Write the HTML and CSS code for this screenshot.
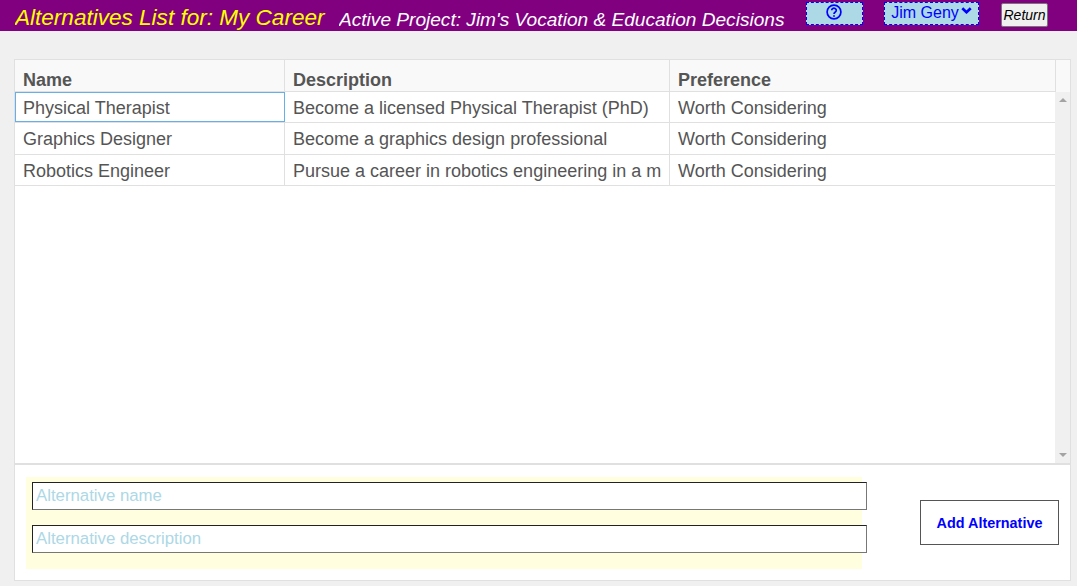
FILE: index.html
```html
<!DOCTYPE html>
<html lang="en">
<head>
    <meta charset="UTF-8">
    <meta name="viewport" content="width=device-width, initial-scale=1.0">
    <title>Alternatives List</title>
    <link rel="stylesheet" href="styles.css">
</head>
<body>
    <header class="top-bar">
        <h1 class="page-title">Alternatives List for: My Career</h1>
        <span class="project-name">Active Project: Jim's Vocation &amp; Education Decisions</span>
        <button class="nav-button help-button" aria-label="Help">
            <svg width="16" height="16" viewBox="0 0 16 16" fill="none" stroke="currentColor" stroke-width="1.7">
                <circle cx="8" cy="8" r="6.9"></circle>
                <path d="M5.7 6.3a2.3 2.1 0 1 1 3.6 1.7c-.9.6-1.3 1-1.3 2"></path>
                <path d="M8 11.2v1.6"></path>
            </svg>
        </button>
        <button class="nav-button user-button">
            Jim Geny
            <svg width="11" height="7" viewBox="0 0 12 8" fill="none" stroke="currentColor" stroke-width="3">
                <path d="M1.2 1.4L6 6l4.8-4.6"></path>
            </svg>
        </button>
        <button class="return-button">Return</button>
    </header>

    <main class="panel">
        <div class="grid">
            <div class="grid-head">
                <div class="cell name-col">Name</div>
                <div class="cell desc-col">Description</div>
                <div class="cell pref-col">Preference</div>
                <div class="head-spacer"></div>
            </div>
            <div class="grid-body">
                <div class="rows">
                    <div class="row">
                        <div class="cell name-col focused">Physical Therapist</div>
                        <div class="cell desc-col"><div class="cell-text">Become a licensed Physical Therapist (PhD)</div></div>
                        <div class="cell pref-col">Worth Considering</div>
                    </div>
                    <div class="row tall-row">
                        <div class="cell name-col">Graphics Designer</div>
                        <div class="cell desc-col"><div class="cell-text">Become a graphics design professional</div></div>
                        <div class="cell pref-col">Worth Considering</div>
                    </div>
                    <div class="row">
                        <div class="cell name-col">Robotics Engineer</div>
                        <div class="cell desc-col"><div class="cell-text">Pursue a career in robotics engineering in a major company</div></div>
                        <div class="cell pref-col">Worth Considering</div>
                    </div>
                </div>
                <div class="scrollbar">
                    <span class="arrow arrow-up"></span>
                    <span class="arrow arrow-down"></span>
                </div>
            </div>
        </div>

        <div class="add-form">
            <div class="fields">
                <input class="field" type="text" placeholder="Alternative name">
                <input class="field" type="text" placeholder="Alternative description">
            </div>
            <button class="add-button">Add Alternative</button>
        </div>
    </main>
</body>
</html>
```

FILE: styles.css
```css
* {
    margin: 0;
    padding: 0;
    box-sizing: border-box;
}

body {
    font-family: 'Liberation Sans', Arial, sans-serif;
    background: #f0f0f0;
    height: 586px;
    overflow: hidden;
}

.top-bar {
    height: 31px;
    background: #800080;
    display: flex;
    align-items: flex-start;
    padding-left: 15px;
}

.page-title {
    width: 324px;
    font-size: 22.55px;
    font-weight: 400;
    font-style: italic;
    line-height: 36px;
    height: 31px;
    overflow: hidden;
    color: #ffff00;
    white-space: nowrap;
}

.project-name {
    width: 467px;
    font-size: 19.1px;
    font-style: italic;
    line-height: 39px;
    height: 31px;
    overflow: hidden;
    color: #fff;
    white-space: nowrap;
}

.nav-button {
    height: 23px;
    margin-top: 2px;
    background: lightblue;
    border: 1px dashed #0000ff;
    color: #0000ff;
    font-family: inherit;
    font-size: 16px;
    display: flex;
    justify-content: center;
}

.help-button {
    width: 57px;
    padding: 1px 1px 0 0;
}

.user-button {
    width: 95px;
    margin-left: 21px;
    gap: 2px;
    line-height: 20px;
}

.user-button svg {
    margin-top: 4px;
}

.return-button {
    width: 47px;
    height: 24px;
    margin: 3px 0 0 22px;
    background: #f0f0f0;
    border: 1px solid #777;
    border-radius: 2px;
    color: #000;
    font-family: inherit;
    font-size: 14px;
    font-style: italic;
}

.panel {
    margin: 28px 6px 0 14px;
    height: 522px;
    display: flex;
    flex-direction: column;
    background: #fff;
    border: 1px solid #e0e0e0;
}

.grid {
    height: 405px;
    display: flex;
    flex-direction: column;
    border-bottom: 2px solid #e0e0e0;
}

.grid-head {
    height: 32px;
    display: flex;
    background: #f9f9f9;
    font-weight: 700;
}

.grid-head .cell {
    padding-top: 9px;
    line-height: 23px;
    border-bottom: 1px solid #e0e0e0;
}

.head-spacer {
    flex: 1;
}

.grid-body {
    flex: 1;
    display: flex;
    min-height: 0;
}

.rows {
    width: 1040px;
}

.row {
    height: 31px;
    display: flex;
    border-bottom: 1px solid #e0e0e0;
}

.tall-row {
    height: 32px;
}

.cell {
    padding: 1px 8px 0;
    font-size: 18px;
    line-height: 30px;
    color: #555;
    white-space: nowrap;
    overflow: hidden;
    border-right: 1px solid #e0e0e0;
}

.cell-text {
    overflow: hidden;
}

.name-col {
    width: 270px;
}

.desc-col {
    width: 385px;
}

.pref-col {
    width: 385px;
    border-right: none;
}

.grid-head .pref-col {
    width: 386px;
    border-right: 1px solid #e0e0e0;
}

.focused {
    border: 1px solid #66afe9;
    padding: 0 7px;
    line-height: 30px;
}

.scrollbar {
    width: 15px;
    background: #f0f0f0;
    display: flex;
    flex-direction: column;
    justify-content: space-between;
    align-items: center;
    padding: 6px 0;
}

.arrow {
    width: 0;
    height: 0;
    border-left: 4px solid transparent;
    border-right: 4px solid transparent;
}

.arrow-up {
    border-bottom: 4px solid #a3a3a3;
}

.arrow-down {
    border-top: 4px solid #a3a3a3;
}

.add-form {
    flex: 1;
    display: flex;
    align-items: flex-start;
    padding: 12px 11px 0;
}

.fields {
    width: 836px;
    height: 92px;
    background: #ffffe0;
    padding: 5px 0 0 6px;
    margin-right: 58px;
    display: flex;
    flex-direction: column;
    gap: 15px;
    flex-shrink: 0;
}

.field {
    width: 835px;
    height: 28px;
    flex-shrink: 0;
    border: 1px solid #222;
    border-right-color: #777;
    border-bottom-color: #777;
    font-family: inherit;
    font-size: 16.8px;
    padding: 0 3px;
    background: #fff;
}

.field::placeholder {
    color: lightblue;
    opacity: 1;
}

.add-button {
    width: 139px;
    height: 45px;
    margin-top: 23px;
    flex-shrink: 0;
    background: #fff;
    border: 1px solid #555;
    color: #0000ff;
    font-family: inherit;
    font-size: 14.4px;
    font-weight: 700;
}
```
